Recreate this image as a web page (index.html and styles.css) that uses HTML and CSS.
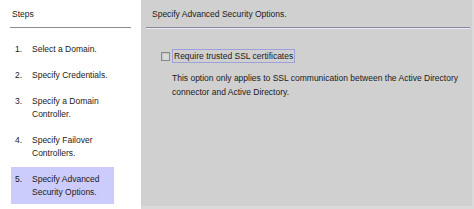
FILE: index.html
```html
<!DOCTYPE html>
<html lang="en">
<head>
    <meta charset="UTF-8">
    <title>Specify Advanced Security Options</title>
    <link rel="stylesheet" href="styles.css">
</head>
<body>
    <div class="wizard">
        <!-- Steps -->
        <div class="steps">
            <div class="steps-title">Steps</div>
            <ol class="step-list">
                <li class="step"><span class="num">1.</span><span>Select a Domain.</span></li>
                <li class="step"><span class="num">2.</span><span>Specify Credentials.</span></li>
                <li class="step"><span class="num">3.</span><span>Specify a Domain Controller.</span></li>
                <li class="step"><span class="num">4.</span><span>Specify Failover Controllers.</span></li>
                <li class="step current"><span class="num">5.</span><span>Specify Advanced Security Options.</span></li>
            </ol>
        </div>

        <!-- Content -->
        <div class="content">
            <div class="content-title">Specify Advanced Security Options.</div>
            <label class="option">
                <span class="checkbox"></span>
                <span class="option-label">Require trusted SSL certificates</span>
            </label>
            <p class="note">This option only applies to SSL communication between the Active Directory connector and Active Directory.</p>
        </div>
    </div>
</body>
</html>
```

FILE: styles.css
```css
body {
    margin: 0;
    font-family: "Liberation Sans", Arial, sans-serif;
    font-size: 8.5px;
    line-height: 13px;
    color: #1a1a1a;
    background-color: #fff;
}

.wizard {
    display: flex;
    width: 474px;
    height: 209px;
}

.steps {
    width: 141px;
    flex-shrink: 0;
    background-color: #fff;
    padding: 8px 0 0 10px;
    box-sizing: border-box;
}

.steps-title {
    padding: 0 0 6px 2px;
    border-bottom: 1px solid #8c8c8c;
    width: 119px;
}

.step-list {
    list-style: none;
    margin: 11px 0 0 1px;
    padding: 0;
    width: 103px;
}

.step {
    display: flex;
    padding: 4px 0 5px 4px;
    margin-bottom: 4px;
}

.step .num {
    width: 17px;
    flex-shrink: 0;
}

.step.current {
    background-color: #ccccfc;
    padding-top: 6px;
    margin-top: -2px;
}

.content {
    flex: 1;
    background-color: #d0d0d0;
    padding: 8px 2px 0 5px;
    border-right: 2px solid #dadada;
    border-bottom: 3px solid #dadada;
}

.content-title {
    padding: 0 0 6px 6px;
    border-bottom: 1px solid #8a8aa0;
    box-shadow: 0 1px 0 #e6e6ee;
}

.option {
    display: flex;
    align-items: center;
    margin: 21px 0 0 15px;
}

.checkbox {
    width: 7px;
    height: 7px;
    border: 1px solid #8a8a8a;
    background-color: #d8d8d8;
    box-shadow: inset 1px 1px 0 #c4c4c4;
    margin-right: 2px;
}

.option-label {
    border: 1px solid #a0a0d8;
    padding: 0 1px;
    line-height: 12px;
}

.note {
    margin: 8px 0 0 26px;
    line-height: 14px;
}
```
